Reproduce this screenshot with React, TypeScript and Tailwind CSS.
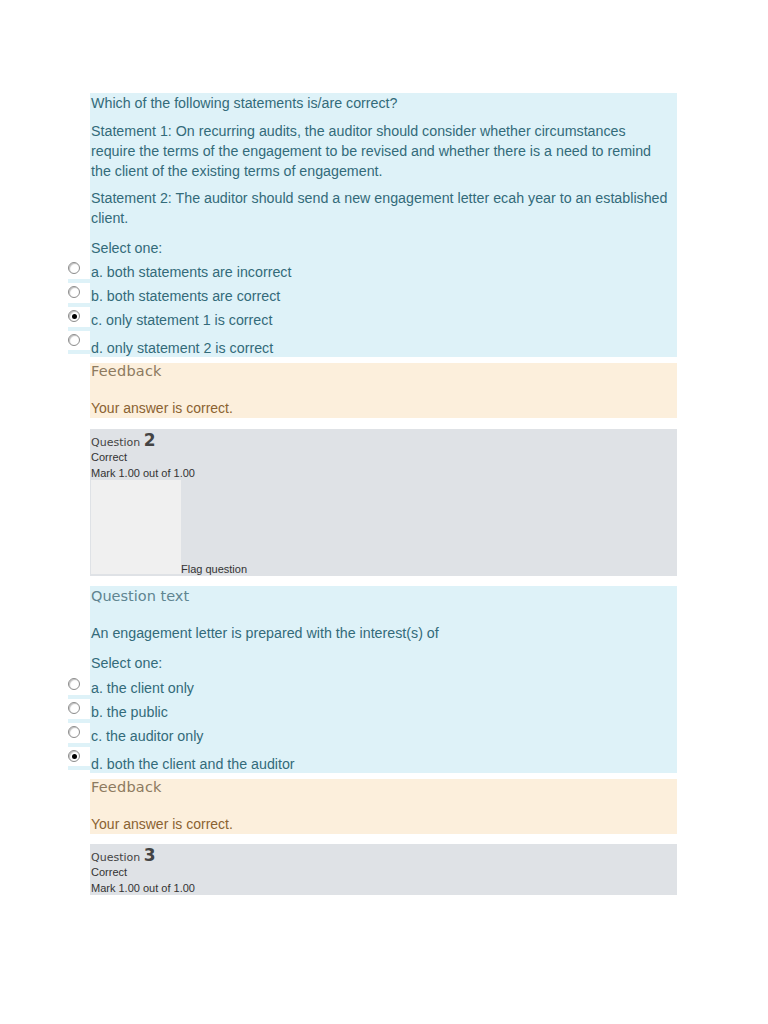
import React from 'react';

const body = { fontFamily: '"Liberation Sans", Arial, sans-serif' };
const deja = { fontFamily: '"DejaVu Sans", Verdana, sans-serif' };

const Radio: React.FC<{ checked?: boolean }> = ({ checked }) => (
  <div className="w-[12px] h-[12px] rounded-full border border-[#8c8c8c] bg-white flex items-center justify-center shadow-[inset_1px_1px_1px_rgba(0,0,0,0.25)]">
    {checked && <div className="w-[5px] h-[5px] rounded-full bg-black" />}
  </div>
);

const Option: React.FC<{ label: string; checked?: boolean; last?: boolean }> = ({ label, checked, last }) => (
  <div className={`flex ${last ? 'h-[23px]' : 'h-[24px]'}`}>
    <div className="w-[22px] flex flex-col">
      <Radio checked={checked} />
      <div className="mt-auto mb-[3px] h-[4px] bg-[#def2f8]" />
    </div>
    <div className={`flex-1 bg-[#def2f8] pl-[1px] leading-[20px] ${last ? 'pt-[4px]' : ''}`}>{label}</div>
  </div>
);

const Feedback: React.FC = () => (
  <div className="ml-[22px] mt-[6px] h-[55px] bg-[#fcefdc] pl-[1px]">
    <div className="text-[14.5px] leading-[17px] text-[#8d7a5f] tracking-[0.2px]" style={deja}>Feedback</div>
    <div className="mt-[19px] text-[14px] leading-[18px] text-[#8a6231]">Your answer is correct.</div>
  </div>
);

const Header: React.FC<{ n: number }> = ({ n }) => (
  <>
    <div className="h-[21px] pt-[1px] flex items-baseline text-[#444]" style={deja}>
      <span className="text-[11px] leading-[20px]">Question&nbsp;</span>
      <span className="text-[17px] leading-[20px] font-bold">{n}</span>
    </div>
    <div className="text-[11px] leading-[14px] text-[#333]">Correct</div>
    <div className="mt-[2px] text-[11px] leading-[14px] text-[#333]">Mark 1.00 out of 1.00</div>
  </>
);

export default function App() {
  return (
    <div className="min-h-[1024px] bg-white pt-[93px]" style={body}>
      <div className="ml-[68px] w-[609px] text-[14.25px] text-[#336b7a]">
        {/* question 1 */}
        <div className="ml-[22px] bg-[#def2f8] pl-[1px] leading-[20px] whitespace-nowrap">
          <p>Which of the following statements is/are correct?</p>
          <p className="mt-[8px]">
            Statement 1: On recurring audits, the auditor should consider whether circumstances
            <br />
            require the terms of the engagement to be revised and whether there is a need to remind
            <br />
            the client of the existing terms of engagement.
          </p>
          <p className="mt-[7px]">
            Statement 2: The auditor should send a new engagement letter ecah year to an established
            <br />
            client.
          </p>
          <p className="mt-[10px] pb-[4px]">Select one:</p>
        </div>
        <Option label="a. both statements are incorrect" />
        <Option label="b. both statements are correct" />
        <Option label="c. only statement 1 is correct" checked />
        <Option label="d. only statement 2 is correct" last />
        <Feedback />

        {/* question 2 header */}
        <div className="ml-[22px] mt-[11px] bg-[#dfe2e6] pl-[1px]">
          <Header n={2} />
          <div className="flex h-[96px]">
            <div className="w-[90px] h-[94px] bg-[#f0f0f0]" />
            <div className="self-end text-[11px] leading-[14px] text-[#333]">Flag question</div>
          </div>
        </div>

        {/* question 2 */}
        <div className="ml-[22px] mt-[10px] bg-[#def2f8] pl-[1px] leading-[20px]">
          <div className="pt-[1px] text-[14.5px] leading-[18px] text-[#5f8591]" style={deja}>Question text</div>
          <p className="mt-[18px]">An engagement letter is prepared with the interest(s) of</p>
          <p className="mt-[10px] pb-[5px]">Select one:</p>
        </div>
        <Option label="a. the client only" />
        <Option label="b. the public" />
        <Option label="c. the auditor only" />
        <Option label="d. both the client and the auditor" checked last />
        <Feedback />

        {/* question 3 header */}
        <div className="ml-[22px] mt-[10px] h-[51px] bg-[#dfe2e6] pl-[1px]">
          <Header n={3} />
        </div>
      </div>
    </div>
  );
}
